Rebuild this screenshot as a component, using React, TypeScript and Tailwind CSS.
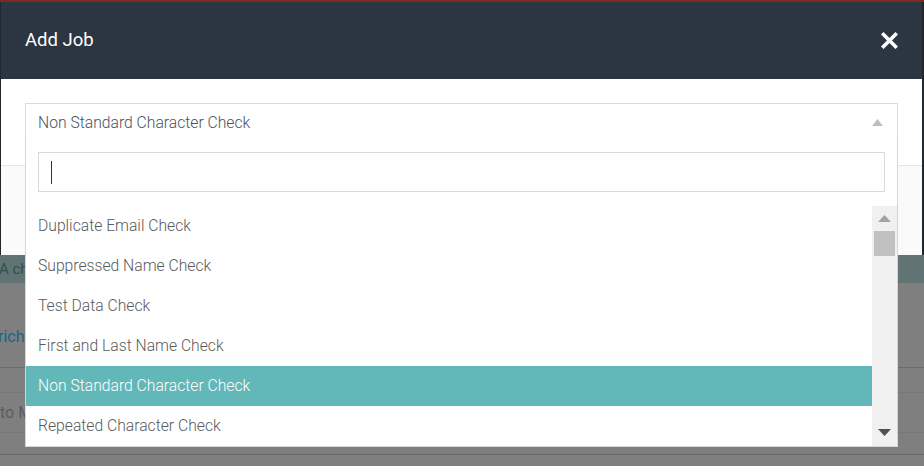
import React from "react";

const items = [
  "Duplicate Email Check",
  "Suppressed Name Check",
  "Test Data Check",
  "First and Last Name Check",
  "Non Standard Character Check",
  "Repeated Character Check",
];

export default function App() {
  return (
    <div className="relative w-[924px] h-[466px] overflow-hidden bg-[#7f7f7f] font-['Roboto',sans-serif]">
      {/* page behind the overlay */}
      <div className="flex flex-col">
        <div className="h-[2px] bg-[#7b2b23]" />
        <div className="h-[253px] bg-[#22272e]" />
        <div className="h-[28px] bg-[#617372] flex items-center text-[15px] text-[#2f4f50] -ml-[1px] whitespace-nowrap">A check</div>
        <div className="h-[85px] flex items-center pt-[24px] text-[16px] text-[#16658a] -ml-[2px] whitespace-nowrap border-b border-[#6a6a6a]">richment</div>
        <div className="h-[25px] border-b border-[#777]" />
        <div className="h-[40px] flex items-center text-[16px] text-[#5c5c5c] whitespace-nowrap border-b border-[#777]">to M</div>
        <div className="h-[21px]" />
        <div className="flex-1 h-[20px] bg-[#6f6f6f] border-t border-[#686868]" />
      </div>

      {/* modal */}
      <div className="absolute left-[1px] top-[2px] w-[921px] flex flex-col">
        <div className="h-[77px] bg-[#2c3542] flex items-center justify-between pl-6 pr-6">
          <span className="text-white text-[18.5px] leading-none">Add Job</span>
          <svg width="17" height="17" viewBox="0 0 17 17">
            <path d="M2.5 2.5 L14.5 14.5 M14.5 2.5 L2.5 14.5" stroke="#fff" strokeWidth="3.6" strokeLinecap="square" />
          </svg>
        </div>
        <div className="relative h-[86px] bg-white px-6 pt-6">
          <div className="h-[39px] border border-[#dadada] flex items-center justify-between pl-3 pr-[14px]">
            <span className="text-[15.7px] font-light text-[#4a525d]">Non Standard Character Check</span>
            <svg width="11" height="7" viewBox="0 0 11 7">
              <path d="M0 7 L5.5 0 L11 7 Z" fill="#bdbdbd" />
            </svg>
          </div>
          {/* dropdown */}
          <div className="absolute left-6 top-[62px] w-[873px] bg-white border border-[#d6d6d6] border-t-0 z-10">
            <div className="px-3 pt-[11px] pb-[14px]">
              <div className="h-[40px] border border-[#d9d9d9] flex items-center pl-3">
                <div className="w-[1px] h-[23px] bg-[#333]" />
              </div>
            </div>
            <div className="flex">
              <div className="flex-1 flex flex-col">
                {items.map((it) => {
                  const active = it === "Non Standard Character Check";
                  return (
                    <div
                      key={it}
                      className={
                        active
                          ? "h-[40px] flex items-center pl-3 text-[15.7px] font-light text-white bg-[#62b7b8]"
                          : "h-[40px] flex items-center pl-3 text-[15.7px] font-light text-[#5a5a5a]"
                      }
                    >
                      {it}
                    </div>
                  );
                })}
              </div>
              <div className="w-[25px] bg-[#f0f0f0] flex flex-col items-center">
                <svg width="13" height="7" viewBox="0 0 13 7" className="mt-[9px]">
                  <path d="M0 7 L6.5 0 L13 7 Z" fill="#a3a3a3" />
                </svg>
                <div className="mt-[9px] w-[21px] h-[25px] bg-[#c1c1c1]" />
                <div className="flex-1" />
                <svg width="13" height="7" viewBox="0 0 13 7" className="mb-[10px]">
                  <path d="M0 0 L6.5 7 L13 0 Z" fill="#505050" />
                </svg>
              </div>
            </div>
          </div>
        </div>
        <div className="h-[90px] bg-[#fafafa] border-t border-[#e5e5e5]" />
      </div>
    </div>
  );
}
